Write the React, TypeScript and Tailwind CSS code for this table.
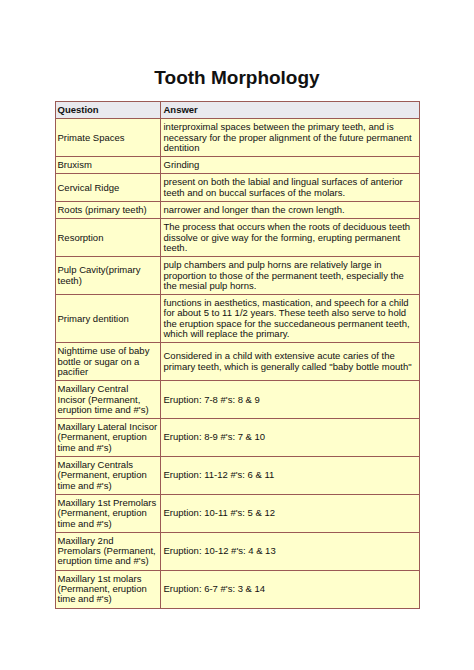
import React from "react";

type Row = { q: string[]; a: string[] };

const rows: Row[] = [
  {
    q: ["Primate Spaces"],
    a: [
      "interproximal spaces between the primary teeth, and is",
      "necessary for the proper alignment of the future permanent",
      "dentition",
    ],
  },
  { q: ["Bruxism"], a: ["Grinding"] },
  {
    q: ["Cervical Ridge"],
    a: [
      "present on both the labial and lingual surfaces of anterior",
      "teeth and on buccal surfaces of the molars.",
    ],
  },
  { q: ["Roots (primary teeth)"], a: ["narrower and longer than the crown length."] },
  {
    q: ["Resorption"],
    a: [
      "The process that occurs when the roots of deciduous teeth",
      "dissolve or give way for the forming, erupting permanent",
      "teeth.",
    ],
  },
  {
    q: ["Pulp Cavity(primary", "teeth)"],
    a: [
      "pulp chambers and pulp horns are relatively large in",
      "proportion to those of the permanent teeth, especially the",
      "the mesial pulp horns.",
    ],
  },
  {
    q: ["Primary dentition"],
    a: [
      "functions in aesthetics, mastication, and speech for a child",
      "for about 5 to 11 1/2 years. These teeth also serve to hold",
      "the eruption space for the succedaneous permanent teeth,",
      "which will replace the primary.",
    ],
  },
  {
    q: ["Nighttime use of baby", "bottle or sugar on a", "pacifier"],
    a: [
      "Considered in a child with extensive acute caries of the",
      "primary teeth, which is generally called \"baby bottle mouth\"",
    ],
  },
  {
    q: ["Maxillary Central", "Incisor (Permanent,", "eruption time and #'s)"],
    a: ["Eruption: 7-8 #'s: 8 & 9"],
  },
  {
    q: ["Maxillary Lateral Incisor", "(Permanent, eruption", "time and #'s)"],
    a: ["Eruption: 8-9 #'s: 7 & 10"],
  },
  {
    q: ["Maxillary Centrals", "(Permanent, eruption", "time and #'s)"],
    a: ["Eruption: 11-12 #'s: 6 & 11"],
  },
  {
    q: ["Maxillary 1st Premolars", "(Permanent, eruption", "time and #'s)"],
    a: ["Eruption: 10-11 #'s: 5 & 12"],
  },
  {
    q: ["Maxillary 2nd", "Premolars (Permanent,", "eruption time and #'s)"],
    a: ["Eruption: 10-12 #'s: 4 & 13"],
  },
  {
    q: ["Maxillary 1st molars", "(Permanent, eruption", "time and #'s)"],
    a: ["Eruption: 6-7 #'s: 3 & 14"],
  },
];

function Lines({ lines }: { lines: string[] }) {
  return (
    <>
      {lines.map((l, i) => (
        <div key={i} className="whitespace-nowrap">
          {l}
        </div>
      ))}
    </>
  );
}

export default function App() {
  return (
    <div
      className="w-[474px] h-[670px] bg-white text-[#111] overflow-hidden"
      style={{ fontFamily: '"Liberation Sans", Arial, sans-serif' }}
    >
      <h1 className="pt-[67px] text-center text-[19px] leading-[22px] font-bold text-[#111]">
        Tooth Morphology
      </h1>
      <div className="mt-[12px] flex justify-center">
        <table className="w-[365px] border-collapse border-[1.5px] border-[#9b5a55] text-[9.5px] leading-[10.3px]">
          <colgroup>
            <col className="w-[105px]" />
            <col />
          </colgroup>
          <thead>
            <tr className="bg-[#e9e9ee]">
              <th className="border border-[#9b5a55] px-[2px] py-[3px] text-left font-bold">
                Question
              </th>
              <th className="border border-[#9b5a55] px-[3px] py-[3px] text-left font-bold">
                Answer
              </th>
            </tr>
          </thead>
          <tbody>
            {rows.map((r, i) => (
              <tr key={i} className="bg-[#ffffcc]">
                <td className="border border-[#9b5a55] px-[2px] py-[3px] align-middle">
                  <Lines lines={r.q} />
                </td>
                <td className="border border-[#9b5a55] px-[3px] py-[3px] align-middle">
                  <Lines lines={r.a} />
                </td>
              </tr>
            ))}
          </tbody>
        </table>
      </div>
    </div>
  );
}
